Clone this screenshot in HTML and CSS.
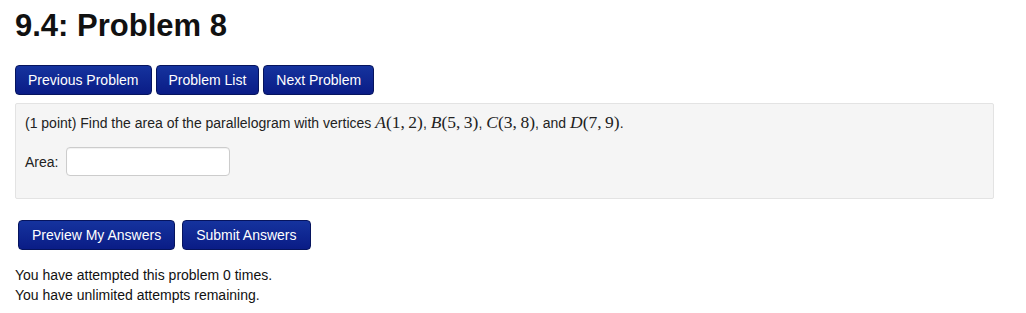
FILE: index.html
```html
<!DOCTYPE html>
<html lang="en">
<head>
    <meta charset="UTF-8">
    <title>9.4: Problem 8</title>
    <link rel="stylesheet" href="styles.css">
</head>
<body>
<div class="page">
    <h1>9.4: Problem 8</h1>

    <div class="nav-buttons">
        <a href="#" class="btn">Previous Problem</a>
        <a href="#" class="btn">Problem List</a>
        <a href="#" class="btn">Next Problem</a>
    </div>

    <div class="problem">
        <p class="statement">(1 point) Find the area of the parallelogram with vertices
            <span class="math"><i>A</i>(1,&thinsp;2)</span>, <span class="math"><i>B</i>(5,&thinsp;3)</span>, <span class="math"><i>C</i>(3,&thinsp;8)</span>, and <span class="math"><i>D</i>(7,&thinsp;9)</span>.</p>
        <p class="answer">Area: <input type="text" class="answer-input"></p>
    </div>

    <div class="submit-buttons">
        <button class="btn">Preview My Answers</button>
        <button class="btn">Submit Answers</button>
    </div>

    <p class="attempts">You have attempted this problem 0 times.<br>
        You have unlimited attempts remaining.</p>
</div>
</body>
</html>
```

FILE: styles.css
```css
body {
    margin: 0;
    font-family: "Liberation Sans", Arial, sans-serif;
    font-size: 14px;
    color: #222;
    background: white;
}
.page {
    padding: 0 32px 0 15px;
}
h1 {
    font-size: 31px;
    font-weight: bold;
    color: #111;
    margin: 0;
    padding-top: 7px;
    line-height: 37px;
}
.nav-buttons {
    display: flex;
    gap: 4px;
    margin-top: 21px;
}
.btn {
    display: inline-flex;
    align-items: center;
    height: 30px;
    box-sizing: border-box;
    padding: 0 13px;
    font-family: "Liberation Sans", Arial, sans-serif;
    font-size: 14px;
    color: white;
    text-decoration: none;
    background: linear-gradient(#15339e, #0a1c86);
    border: 1px solid #06145e;
    border-radius: 4px;
    cursor: pointer;
}
.nav-buttons .btn {
    padding: 0 12px;
}
.btn:hover {
    background: #0a1f8a;
}
.problem {
    margin-top: 8px;
    background: #f5f5f5;
    border: 1px solid #e3e3e3;
    border-radius: 2px;
    padding: 9px 9px 22px;
}
.statement {
    margin: 0;
    line-height: 19px;
}
.math {
    font-family: "Liberation Serif", "Times New Roman", serif;
    font-size: 17.5px;
}
.math i {
    font-style: italic;
}
.answer {
    margin: 14px 0 0;
    display: flex;
    align-items: center;
    gap: 8px;
}
.answer-input {
    width: 164px;
    height: 29px;
    box-sizing: border-box;
    border: 1px solid #ccc;
    border-radius: 4px;
    background: white;
    box-shadow: inset 0 1px 1px rgba(0, 0, 0, 0.06);
}
.submit-buttons {
    display: flex;
    gap: 7px;
    margin: 21px 0 0 3px;
}
.attempts {
    margin: 15px 0 0;
    line-height: 20px;
    color: #111;
}
```
